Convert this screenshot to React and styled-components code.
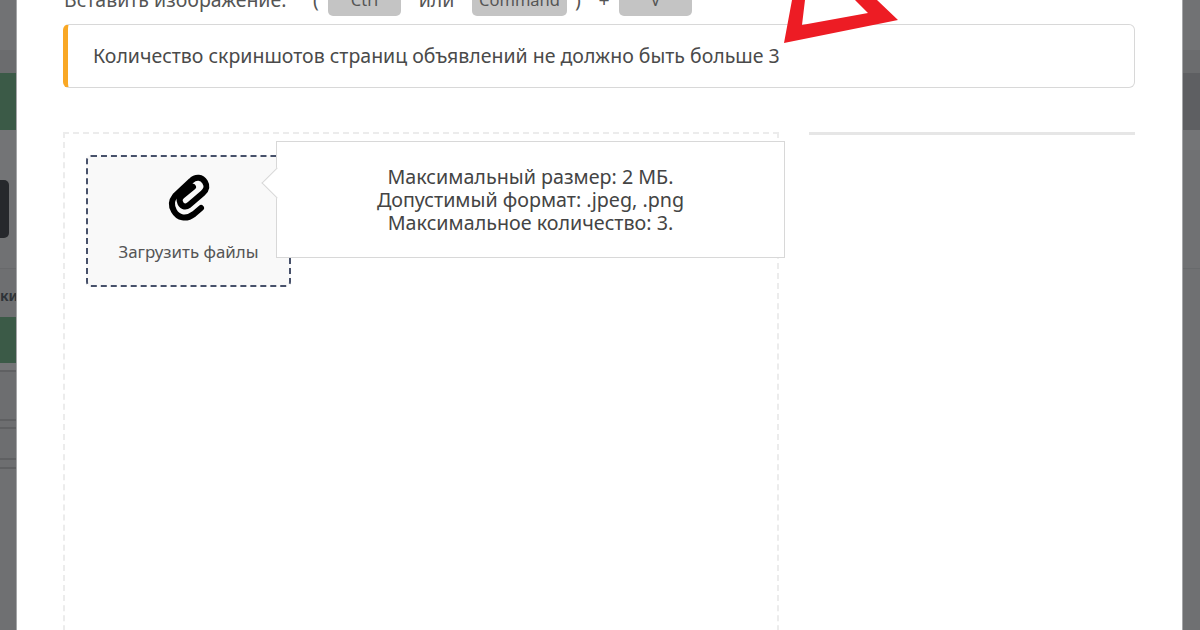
import React from "react";
import styled, { createGlobalStyle } from "styled-components";

const GlobalStyle = createGlobalStyle`
  html, body {
    margin: 0;
    padding: 0;
    height: 100%;
    overflow: hidden;
    background: #707173;
  }
  * {
    box-sizing: border-box;
  }
`;

const Page = styled.div`
  position: relative;
  width: 1200px;
  height: 630px;
  overflow: hidden;
  font-family: "Noto Sans", "Open Sans", sans-serif;
  color: #444;
`;

const Backdrop = styled.div`
  display: flex;
  justify-content: space-between;
  height: 100%;
`;

const BackdropColumn = styled.div`
  display: flex;
  flex-direction: column;
  width: ${(p) => p.$width}px;
  overflow: hidden;
  background: #6f7072;
`;

const Band = styled.div`
  display: flex;
  align-items: center;
  flex-shrink: 0;
  height: ${(p) => p.$height}px;
  background: ${(p) => p.$tone};
`;

const DarkButton = styled.div`
  width: 9px;
  height: 58px;
  background: #26282c;
  border-radius: 0 5px 5px 0;
`;

const CutLabel = styled.div`
  width: 100%;
  text-align: right;
  font-size: 14px;
  font-weight: 700;
  white-space: nowrap;
  color: #2f3338;
  padding-right: 3px;
`;

const Modal = styled.div`
  position: absolute;
  top: 0;
  left: 17px;
  width: 1165px;
  height: 630px;
  padding: 0 47px 0 46px;
  background: #fff;
  box-shadow: 0 0 0 1px #a5a6a8;
`;

const PasteRow = styled.div`
  display: flex;
  align-items: center;
  height: 34px;
  margin-top: -18px;
  margin-left: 1px;
  font-size: 19.5px;
  color: #555;
`;

const PasteLabel = styled.span`
  width: 249px;
  white-space: nowrap;
`;

const PasteSign = styled.span`
  width: ${(p) => p.$width}px;
  text-align: ${(p) => p.$align || "left"};
`;

const Key = styled.span`
  display: flex;
  align-items: center;
  justify-content: center;
  width: ${(p) => p.$width}px;
  height: 34px;
  background: #c4c4c4;
  border-radius: 5px;
  font-size: 16.5px;
`;

const Alert = styled.div`
  display: flex;
  align-items: center;
  height: 64px;
  margin-top: 8px;
  padding: 0 0 2px 25px;
  background: #fff;
  border: 1px solid #d8d8d8;
  border-left: 5px solid #f9a825;
  border-radius: 6px;
  font-size: 19.5px;
  color: #4a4a4a;
`;

const Columns = styled.div`
  display: grid;
  grid-template-columns: 716px 326px;
  gap: 30px;
  margin-top: 44px;
`;

const DropZone = styled.div`
  position: relative;
  height: 600px;
  padding: 21px;
  border: 2px dashed #ececec;
`;

const SideRule = styled.div`
  height: 3px;
  background: #e6e6e6;
`;

const UploadBox = styled.div`
  display: flex;
  flex-direction: column;
  align-items: center;
  width: 205px;
  height: 132px;
  padding-top: 7px;
  background: #f9f9f9;
  border: 2px dashed #47516a;
  border-radius: 5px;
`;

const ClipIcon = styled.svg`
  display: block;
  flex-shrink: 0;
  width: 60px;
  height: 60px;
  margin-right: 2px;
`;

const UploadLabel = styled.span`
  margin-top: 16px;
  font-size: 16.9px;
  line-height: 23px;
  white-space: nowrap;
  color: #555;
`;

const Tooltip = styled.div`
  position: absolute;
  top: 7px;
  left: 211px;
  width: 509px;
  height: 117px;
  padding-top: 23px;
  background: #fff;
  border: 1px solid #d8d8d8;
  font-size: 19.7px;
  line-height: 23px;
  text-align: center;
  color: #444;

  &::before {
    content: "";
    position: absolute;
    top: 30px;
    left: -11px;
    width: 21px;
    height: 21px;
    background: #fff;
    border-left: 1px solid #d8d8d8;
    border-bottom: 1px solid #d8d8d8;
    transform: rotate(45deg);
  }
`;

const TooltipLine = styled.div`
  position: relative;
`;

const Arrow = styled.svg`
  position: absolute;
  top: 0;
  left: 770px;
  width: 140px;
  height: 50px;
`;

const leftBands = [
  { height: 50, tone: "#717274" },
  { height: 23, tone: "#6b6c6e" },
  { height: 57, tone: "#3b5a47" },
  { height: 50, tone: "#737476" },
];

const rightBands = [
  { height: 50, tone: "#717274" },
  { height: 23, tone: "#6b6c6e" },
  { height: 57, tone: "#5e5f62" },
  { height: 20, tone: "#737476" },
  { height: 118, tone: "#707173" },
  { height: 1, tone: "#686a6c" },
];

const App = () => {
  return (
    <Page>
      <GlobalStyle />
      <Backdrop>
        <BackdropColumn $width={17}>
          {leftBands.map((band, i) => (
            <Band key={i} $height={band.height} $tone={band.tone} />
          ))}
          <Band $height={58} $tone="#707173">
            <DarkButton />
          </Band>
          <Band $height={30} $tone="#707173" />
          <Band $height={1} $tone="#68696b" />
          <Band $height={12} $tone="#6e6f71" />
          <Band $height={28} $tone="#6e6f71">
            <CutLabel>ки</CutLabel>
          </Band>
          <Band $height={8} $tone="#6e6f71" />
          <Band $height={46} $tone="#3b5a47" />
          <Band $height={7} $tone="#747577" />
          <Band $height={2} $tone="#5f6062" />
          <Band $height={47} $tone="#6d6e70" />
          <Band $height={2} $tone="#5f6062" />
          <Band $height={6} $tone="#6d6e70" />
          <Band $height={2} $tone="#5f6062" />
          <Band $height={29} $tone="#6d6e70" />
          <Band $height={2} $tone="#5f6062" />
          <Band $height={7} $tone="#6d6e70" />
          <Band $height={2} $tone="#5f6062" />
        </BackdropColumn>
        <BackdropColumn $width={18}>
          {rightBands.map((band, i) => (
            <Band key={i} $height={band.height} $tone={band.tone} />
          ))}
        </BackdropColumn>
      </Backdrop>

      <Modal>
        <PasteRow>
          <PasteLabel>Вставить изображение:</PasteLabel>
          <PasteSign $width={15}>(</PasteSign>
          <Key $width={73}>Ctrl</Key>
          <PasteSign $width={71} $align="center">
            или
          </PasteSign>
          <Key $width={95}>Command</Key>
          <PasteSign $width={22} $align="center">
            )
          </PasteSign>
          <PasteSign $width={30} $align="center">
            +
          </PasteSign>
          <Key $width={73}>V</Key>
        </PasteRow>

        <Alert>Количество скриншотов страниц объявлений не должно быть больше 3</Alert>

        <Columns>
          <DropZone>
            <UploadBox>
              <ClipIcon viewBox="0 0 60 60" fill="none">
                <path
                  d="M43 44 L36 50 C28 56 20 54 16 47 C13 42 13 37 17 32 L33 17 C38 12 44 13 47 18 C50 23 48 26 45 29 L31 41 C27 44 23 42 22 38 C21 36 22 34 24 32 L35 23"
                  stroke="#000"
                  strokeWidth="6"
                  strokeLinecap="round"
                  strokeLinejoin="round"
                />
              </ClipIcon>
              <UploadLabel>Загрузить файлы</UploadLabel>
            </UploadBox>
            <Tooltip>
              <TooltipLine>Максимальный размер: 2 МБ.</TooltipLine>
              <TooltipLine>Допустимый формат: .jpeg, .png</TooltipLine>
              <TooltipLine>Максимальное количество: 3.</TooltipLine>
            </Tooltip>
          </DropZone>
          <SideRule />
        </Columns>
      </Modal>

      <Arrow viewBox="770 0 140 50">
        <path
          fillRule="evenodd"
          fill="#ed1c24"
          d="M792 0 L784 43 L898 20 L877 0 Z M805 0 L802 25 L868 13 L855 0 Z"
        />
      </Arrow>
    </Page>
  );
};

export default App;
